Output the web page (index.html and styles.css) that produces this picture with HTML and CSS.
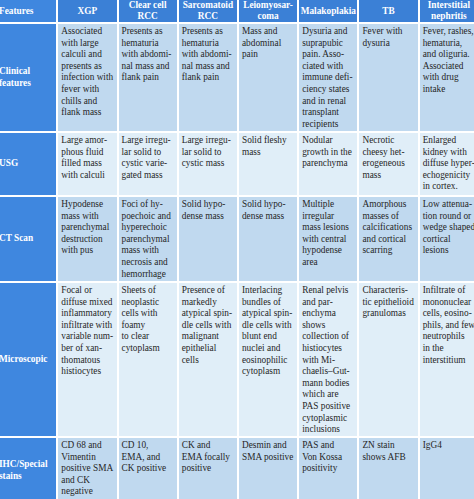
FILE: index.html
```html
<!DOCTYPE html>
<html>
<head>
<meta charset="utf-8">
<link rel="stylesheet" href="styles.css">
</head>
<body>
<table class="grid">
  <colgroup>
    <col class="c-feat"><col class="c-dat"><col class="c-dat"><col class="c-dat"><col class="c-dat"><col class="c-dat"><col class="c-dat"><col class="c-dat">
  </colgroup>
  <thead>
    <tr class="r-head">
      <th class="lead">Features</th>
      <th>XGP</th>
      <th>Clear cell<br>RCC</th>
      <th>Sarcomatoid<br>RCC</th>
      <th>Leiomyosar-<br>coma</th>
      <th>Malakoplakia</th>
      <th>TB</th>
      <th>Interstitial<br>nephritis</th>
    </tr>
  </thead>
  <tbody>
    <tr class="r-clin dark">
      <th class="lead">Clinical<br>features</th>
      <td>Associated<br>with large<br>calculi and<br>presents as<br>infection with<br>fever with<br>chills and<br>flank mass</td>
      <td>Presents as<br>hematuria<br>with abdomi-<br>nal mass and<br>flank pain</td>
      <td>Presents as<br>hematuria<br>with abdomi-<br>nal mass and<br>flank pain</td>
      <td>Mass and<br>abdominal<br>pain</td>
      <td>Dysuria and<br>suprapubic<br>pain. Asso-<br>ciated with<br>immune defi-<br>ciency states<br>and in renal<br>transplant<br>recipients</td>
      <td>Fever with<br>dysuria</td>
      <td>Fever, rashes,<br>hematuria,<br>and oliguria.<br>Associated<br>with drug<br>intake</td>
    </tr>
    <tr class="r-usg light">
      <th class="lead">USG</th>
      <td>Large amor-<br>phous fluid<br>filled mass<br>with calculi</td>
      <td>Large irregu-<br>lar solid to<br>cystic varie-<br>gated mass</td>
      <td>Large irregu-<br>lar solid to<br>cystic mass</td>
      <td>Solid fleshy<br>mass</td>
      <td>Nodular<br>growth in the<br>parenchyma</td>
      <td>Necrotic<br>cheesy het-<br>erogeneous<br>mass</td>
      <td>Enlarged<br>kidney with<br>diffuse hyper-<br>echogenicity<br>in cortex.</td>
    </tr>
    <tr class="r-ct dark">
      <th class="lead">CT Scan</th>
      <td>Hypodense<br>mass with<br>parenchymal<br>destruction<br>with pus</td>
      <td>Foci of hy-<br>poechoic and<br>hyperechoic<br>parenchymal<br>mass with<br>necrosis and<br>hemorrhage</td>
      <td>Solid hypo-<br>dense mass</td>
      <td>Solid hypo-<br>dense mass</td>
      <td>Multiple<br>irregular<br>mass lesions<br>with central<br>hypodense<br>area</td>
      <td>Amorphous<br>masses of<br>calcifications<br>and cortical<br>scarring</td>
      <td>Low attenua-<br>tion round or<br>wedge shaped<br>cortical<br>lesions</td>
    </tr>
    <tr class="r-mic light">
      <th class="lead">Microscopic</th>
      <td>Focal or<br>diffuse mixed<br>inflammatory<br>infiltrate with<br>variable num-<br>ber of xan-<br>thomatous<br>histiocytes</td>
      <td>Sheets of<br>neoplastic<br>cells with<br>foamy<br>to clear<br>cytoplasm</td>
      <td>Presence of<br>markedly<br>atypical spin-<br>dle cells with<br>malignant<br>epithelial<br>cells</td>
      <td>Interlacing<br>bundles of<br>atypical spin-<br>dle cells with<br>blunt end<br>nuclei and<br>eosinophilic<br>cytoplasm</td>
      <td>Renal pelvis<br>and par-<br>enchyma<br>shows<br>collection of<br>histiocytes<br>with Mi-<br>chaelis–Gut-<br>mann bodies<br>which are<br>PAS positive<br>cytoplasmic<br>inclusions</td>
      <td>Characteris-<br>tic epithelioid<br>granulomas</td>
      <td>Infiltrate of<br>mononuclear<br>cells, eosino-<br>phils, and few<br>neutrophils<br>in the<br>interstitium</td>
    </tr>
    <tr class="r-ihc dark">
      <th class="lead">IHC/Special<br>stains</th>
      <td>CD 68 and<br>Vimentin<br>positive SMA<br>and CK<br>negative</td>
      <td>CD 10,<br>EMA, and<br>CK positive</td>
      <td>CK and<br>EMA focally<br>positive</td>
      <td>Desmin and<br>SMA positive</td>
      <td>PAS and<br>Von Kossa<br>positivity</td>
      <td>ZN stain<br>shows AFB</td>
      <td>IgG4</td>
    </tr>
  </tbody>
</table>
</body>
</html>
```
FILE: styles.css
```css
html, body {
  margin: 0;
  padding: 0;
  overflow: hidden;
  background: #ffffff;
}

.grid {
  margin: -2px 0 0 -10px;
  border-collapse: separate;
  border-spacing: 2px;
  table-layout: fixed;
  width: 490px;
  background: #ffffff;
  font-family: "Liberation Serif", "Times New Roman", serif;
  font-size: 9.3px;
  line-height: 11.6px;
  color: #262626;
}

.c-feat { width: 64px; }
.c-dat { width: 58px; }

.grid th,
.grid td {
  padding: 2px 2px 0 3px;
  white-space: nowrap;
  overflow: hidden;
  vertical-align: top;
  text-align: left;
}

.r-head th {
  background: #3b80d6;
  color: #ffffff;
  font-weight: bold;
  text-align: center;
  vertical-align: middle;
  line-height: 11px;
  padding: 0;
}

.r-head th.lead {
  text-align: left;
  padding-left: 5px;
}

.grid th.lead {
  background: #3f87df;
  color: #ffffff;
  font-weight: bold;
  vertical-align: middle;
  padding: 0 0 0 7px;
}

.r-head { height: 22px; }
.r-clin { height: 107px; }
.r-usg { height: 62px; }
.r-ct { height: 84px; }
.r-mic { height: 153px; }
.r-ihc { height: 66px; }

.dark td { background: #c0d9ef; }
.light td { background: #e0eef8; }
```
